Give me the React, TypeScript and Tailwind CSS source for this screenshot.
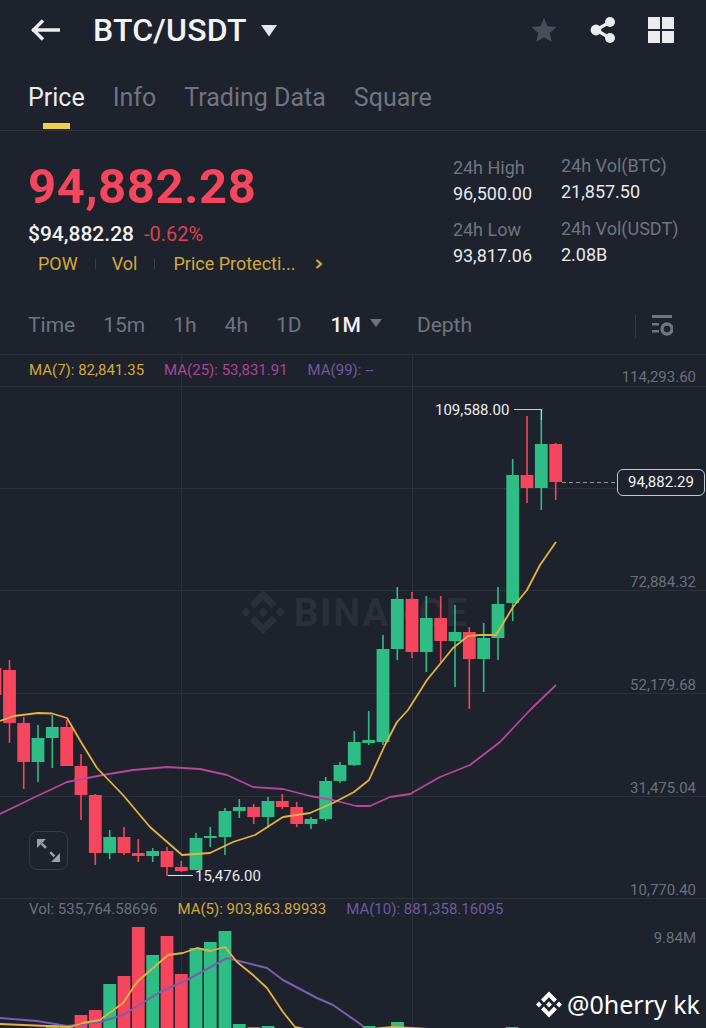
import React from "react";

const GREEN = "#2ebd85";
const RED = "#f6465d";
type C = [number, number, number, number, number, "g" | "r"];
const candles: C[] = [
  [-5, 648, 700, 668, 695, "r"],
  [9.5, 660, 743, 670, 723, "r"],
  [23.7, 717, 789, 723, 762, "r"],
  [38, 725, 782, 738, 762, "g"],
  [52.3, 715, 768, 727, 738, "g"],
  [66.7, 720, 766, 727, 766, "r"],
  [81, 754, 820, 766, 795, "r"],
  [95.3, 794, 865, 795, 853, "r"],
  [109.7, 830, 859, 837, 853, "g"],
  [124, 827, 855, 837, 853, "r"],
  [138.3, 839, 862, 853, 856, "r"],
  [152.7, 848, 862, 851, 856, "g"],
  [167, 847, 876, 851, 867, "r"],
  [181.3, 861, 872, 867, 871, "r"],
  [196, 833, 870, 838, 870, "g"],
  [210.3, 827, 847, 836, 838, "g"],
  [225, 808, 855, 811, 837, "g"],
  [239.3, 799, 818, 807, 811, "g"],
  [253.7, 804, 824, 807, 817, "r"],
  [268, 797, 828, 801, 817, "g"],
  [282.3, 794, 809, 801, 807, "r"],
  [296.7, 802, 827, 807, 824, "r"],
  [311, 817, 829, 819, 824, "g"],
  [325.7, 777, 821, 781, 819, "g"],
  [340, 762, 783, 765, 781, "g"],
  [354.3, 731, 766, 742, 765, "g"],
  [368.7, 711, 745, 740, 743, "g"],
  [383, 635, 745, 649, 742, "g"],
  [397.3, 587, 660, 599, 649, "g"],
  [412, 592, 658, 599, 652, "r"],
  [426.3, 596, 672, 618, 652, "g"],
  [440.7, 596, 662, 618, 641, "r"],
  [455, 605, 687, 632, 641, "g"],
  [469.3, 627, 709, 632, 659, "r"],
  [483.7, 623, 692, 638, 659, "g"],
  [498, 587, 660, 604, 638, "g"],
  [512.7, 459, 621, 475, 603, "g"],
  [527, 416, 503, 475, 488, "r"],
  [541.3, 409, 510, 444, 488, "g"],
  [555.7, 443, 500, 444, 482, "r"],
];
const vols: [number, number, "g" | "r"][] = [
  [52.3, 1025, "g"], [66.7, 1026, "r"], [81, 1015, "r"], [95.3, 1010, "r"], [109.7, 984, "g"],
  [124, 976, "r"], [138.3, 927, "r"], [152.7, 955, "g"], [167, 936, "r"], [181.3, 974, "r"],
  [196, 948, "g"], [210.3, 942, "g"], [225, 931, "g"], [239.3, 1024, "g"], [253.7, 1027, "r"],
  [268, 1026, "g"], [369, 1026, "g"], [397.5, 1022, "g"], [512, 1027, "g"],
];
const ma7 = "M0 721 L14 716 L38 713 L52 713.5 L67 718 L81 742 L97 768 L123 795 L150 827 L182 855 L210 853 L233 842 L255 835 L283 817 L310 813 L333 803 L354 792 L369 780 L385 745 L397 722 L408 710 L427 680 L453 648 L468 636 L480 635 L496 635 L513 607 L527 590 L540 565 L556 542";
const ma25 = "M0 814 L33 798 L67 782 L103 775 L133 770 L167 767 L200 769 L227 775 L253 787 L283 789 L310 796 L333 800 L356 806 L370 806 L390 797 L410 794 L440 777 L470 765 L500 742 L530 710 L556 685";
const vma5 = "M0 1024 L70 1027 L83 1023 L100 1020 L123 1003 L137 982 L153 968 L168 955 L183 953 L197 948 L210 951 L225 947 L237 962 L253 975 L267 988 L283 1012 L295 1027 L305 1029 M370 1029 L393 1027 L430 1029";
const vma10 = "M0 1018 L37 1021 L67 1026 L100 1022 L123 1015 L160 992 L187 980 L227 958 L267 968 L283 980 L317 998 L333 1005 L356 1021 L363 1026";
const BNB = "M16.624 13.9202l2.7175 2.7154-7.353 7.353-7.353-7.352 2.7175-2.7164 4.6355 4.6595 4.6356-4.6595zm4.6366-4.6366L24 12l-2.7154 2.7164L18.5682 12l2.6924-2.7164zm-9.272.001l2.7163 2.6914-2.7164 2.7174v-.001L9.2721 12l2.7164-2.7154zm-9.2722-.001L5.4088 12l-2.6914 2.6924L0 12l2.7164-2.7164zM11.9885.0115l7.353 7.329-2.7174 2.7154-4.6356-4.6356-4.6355 4.6595-2.7174-2.7154 7.353-7.353z";
const top = 355;

function Stat({ label, value }: { label: string; value: string }) {
  return (
    <div className="flex flex-col gap-[4px]">
      <span className="text-[18px] leading-[22px] text-[#6f7480]">{label}</span>
      <span className="text-[18px] leading-[22px] text-[#e6e8ec]">{value}</span>
    </div>
  );
}

function AxisLabel({ y, children }: { y: number; children: string }) {
  return (
    <span className="absolute right-[10px] text-[15px] leading-[18px] text-[#6b707c]" style={{ top: y - top - 9 }}>
      {children}
    </span>
  );
}

export default function App() {
  return (
    <div className="flex h-[1028px] w-full flex-col overflow-hidden bg-[#1e222d] font-['Roboto',sans-serif]">
      <header className="flex h-[60px] shrink-0 items-center pl-[31px] pr-[32px]">
        <svg width="30" height="24" viewBox="0 0 30 24" fill="none" stroke="#eaecef" strokeWidth="3.4" strokeLinejoin="miter">
          <path d="M1 12H29M12 2.5L2.5 12L12 21.5" />
        </svg>
        <h1 className="ml-[32px] text-[32px] font-medium leading-none tracking-[0.2px] text-[#f2f3f5]">BTC/USDT</h1>
        <svg className="ml-[13px]" width="18" height="13" viewBox="0 0 18 13"><path d="M1 1H17L9 12.5Z" fill="#e6e8ec" /></svg>
        <div className="ml-auto flex items-center gap-[31px]">
          <svg width="28" height="28" viewBox="0 0 24 24"><path d="M12 1.5l3.1 7.2 7.6.7-5.8 5.1 1.8 7.7L12 18.2l-6.7 4 1.8-7.7L1.3 9.4l7.6-.7z" fill="#474d5b" /></svg>
          <svg width="28" height="28" viewBox="0 0 28 28" fill="#eaecef" stroke="#eaecef">
            <path d="M21 6L7 14L21 22" fill="none" strokeWidth="3.2" />
            <circle cx="21" cy="6" r="5" stroke="none" /><circle cx="7" cy="14" r="5.4" stroke="none" /><circle cx="21" cy="22" r="5" stroke="none" />
          </svg>
          <div className="grid h-[26px] w-[26px] grid-cols-2 gap-[2px]">
            <span className="bg-[#eaecef]" /><span className="bg-[#eaecef]" /><span className="bg-[#eaecef]" /><span className="bg-[#eaecef]" />
          </div>
        </div>
      </header>

      <nav className="flex h-[71px] shrink-0 items-start gap-[28px] border-b border-[#2f343f] pl-[28px] pt-[22px] text-[25px] leading-[32px] text-[#6f7480]">
        <div className="relative text-[#eaecef]">
          Price
          <span className="absolute left-[15px] top-[41px] h-[6px] w-[27px] bg-[#f0cf4a]" />
        </div>
        <span>Info</span>
        <span>Trading Data</span>
        <span>Square</span>
      </nav>

      <section className="flex h-[170px] shrink-0 justify-between pl-[28px] pr-[27px]">
        <div>
          <div className="mt-[27px] text-[49px] font-bold leading-[58px] tracking-[0.6px] text-[#f6465d]">94,882.28</div>
          <div className="mt-[5px] flex items-baseline gap-[10px] leading-[26px]">
            <span className="text-[21px] font-medium text-[#f0f1f3]">$94,882.28</span>
            <span className="text-[20px] text-[#d9424f]">-0.62%</span>
          </div>
          <div className="mt-[6px] flex items-center pl-[10px] text-[18px] leading-[22px] text-[#d3a93a]">
            <span>POW</span>
            <span className="ml-[17px] h-[10px] w-px bg-[#3a3f4a]" />
            <span className="ml-[16px]">Vol</span>
            <span className="ml-[17px] h-[10px] w-px bg-[#3a3f4a]" />
            <span className="ml-[18px]">Price Protecti...</span>
            <svg className="ml-[18px]" width="10" height="12" viewBox="0 0 10 12" fill="none" stroke="#d3a93a" strokeWidth="2.2"><path d="M2.5 2L7 6L2.5 10" /></svg>
          </div>
        </div>
        <div className="flex gap-[29px]">
          <div className="mt-[26px] flex flex-col gap-[14px]">
            <Stat label="24h High" value="96,500.00" />
            <Stat label="24h Low" value="93,817.06" />
          </div>
          <div className="mt-[24px] flex w-[118px] flex-col gap-[15px]">
            <Stat label="24h Vol(BTC)" value="21,857.50" />
            <Stat label="24h Vol(USDT)" value="2.08B" />
          </div>
        </div>
      </section>

      <div className="flex h-[54px] shrink-0 items-center border-b border-[#2a2f3a] pb-[3px] pl-[28px] pr-[33px] text-[21px] text-[#6f7480]">
        <span>Time</span>
        <span className="ml-[28px]">15m</span>
        <span className="ml-[28px]">1h</span>
        <span className="ml-[28px]">4h</span>
        <span className="ml-[28px]">1D</span>
        <span className="ml-[29px] font-medium text-[#f0f1f3]">1M</span>
        <svg className="ml-[9px] mb-[6px]" width="12" height="8" viewBox="0 0 12 8"><path d="M0 0H12L6 8Z" fill="#6f7480" /></svg>
        <span className="ml-[35px]">Depth</span>
        <span className="ml-auto h-[23px] w-px bg-[#343944]" />
        <svg className="ml-[15px]" width="22" height="24" viewBox="0 0 22 24" fill="#6f7480">
          <rect x="1" y="1" width="20" height="3" />
          <rect x="1" y="9" width="7" height="2.5" />
          <rect x="1" y="16" width="7" height="2.5" />
          <circle cx="16" cy="15" r="5" fill="none" stroke="#6f7480" strokeWidth="3.4" />
        </svg>
      </div>

      <main className="relative min-h-0 flex-1">
        <svg className="absolute left-0 top-0" width="706" height="673" viewBox={`0 ${top} 706 673`}>
          <g stroke="#2b303b" strokeWidth="1">
            {[386, 488, 590, 693, 796, 898].map((y) => <path key={y} d={`M0 ${y + 0.5}H706`} />)}
            <path d="M181.5 355V1028M412.5 355V1028" />
          </g>
          <g fill="#2a2f3a" transform="translate(241 590) scale(1.85)"><path d={BNB} /></g>
          <text x="294" y="626" fontSize="38" fontWeight="700" letterSpacing="2" fill="#2a2f3a" fontFamily="Roboto, sans-serif">BINANCE</text>
          {candles.map(([x, wt, wb, bt, bb, c]) => (
            <g key={x} fill={c === "g" ? GREEN : RED}>
              <rect x={x - 0.8} y={wt} width="1.6" height={wb - wt} />
              <rect x={x - 6.4} y={bt} width="12.8" height={bb - bt} />
            </g>
          ))}
          {vols.map(([x, y, c]) => (
            <rect key={x} x={x - 6.4} y={y} width="12.8" height={1028 - y} fill={c === "g" ? GREEN : RED} />
          ))}
          <g fill="none" strokeWidth="1.8" strokeLinejoin="round">
            <path d={ma25} stroke="#b6479f" />
            <path d={ma7} stroke="#e3b341" />
            <path d={vma10} stroke="#7a5fb0" strokeWidth="2" />
            <path d={vma5} stroke="#e3b341" />
          </g>
          <path d="M514 409.5H541.5V420" fill="none" stroke="#c9ccd2" strokeWidth="1" />
          <path d="M168 875.5H193" fill="none" stroke="#e6e8ec" strokeWidth="1" />
          <path d="M562 482.5H617" fill="none" stroke="#8a8f9a" strokeWidth="1" strokeDasharray="4 3" />
        </svg>

        <div className="absolute left-[29px] top-[6px] flex gap-[20px] text-[15px] leading-[18px]">
          <span className="text-[#d3a93a]">MA(7): 82,841.35</span>
          <span className="text-[#a9449a]">MA(25): 53,831.91</span>
          <span className="text-[#6b5a9e]">MA(99): --</span>
        </div>
        <div className="absolute left-[29px] top-[545px] flex gap-[20px] text-[15px] leading-[18px]">
          <span className="text-[#6b707c]">Vol: 535,764.58696</span>
          <span className="text-[#d3a93a]">MA(5): 903,863.89933</span>
          <span className="text-[#6b5a9e]">MA(10): 881,358.16095</span>
        </div>

        <AxisLabel y={377}>114,293.60</AxisLabel>
        <AxisLabel y={582}>72,884.32</AxisLabel>
        <AxisLabel y={685}>52,179.68</AxisLabel>
        <AxisLabel y={788}>31,475.04</AxisLabel>
        <AxisLabel y={890}>10,770.40</AxisLabel>
        <AxisLabel y={938}>9.84M</AxisLabel>

        <span className="absolute left-[435px] top-[46px] text-[15px] leading-[18px] text-[#eaecef]">109,588.00</span>
        <span className="absolute left-[195px] top-[512px] text-[15px] leading-[18px] text-[#e6e8ec]">15,476.00</span>
        <span className="absolute left-[617px] top-[114px] flex h-[27px] w-[88px] items-center justify-center rounded-[6px] border border-[#c3c6cc] bg-[#1e222d] text-[15px] text-[#f0f1f3]">94,882.29</span>

        <button className="absolute left-[29px] top-[476px] flex h-[39px] w-[39px] items-center justify-center rounded-[8px] border border-[#363b46]">
          <svg width="25" height="25" viewBox="0 0 25 25" fill="#9a9ea8" stroke="#9a9ea8">
            <path d="M1 1H10L1 10Z" stroke="none" />
            <path d="M24 24H15L24 15Z" stroke="none" />
            <path d="M5 5L20 20" fill="none" strokeWidth="2.6" strokeDasharray="6 6" strokeDashoffset="-1" />
          </svg>
        </button>

        <div className="absolute left-[536px] top-[635px] flex items-center gap-[5px] text-[25px] leading-[28px] text-white [font-family:'Noto_Sans',sans-serif]">
          <svg width="26" height="27" viewBox="0 0 24 24" fill="#ffffff"><path d={BNB} /></svg>
          <span>@0herry kk</span>
        </div>
      </main>
    </div>
  );
}
